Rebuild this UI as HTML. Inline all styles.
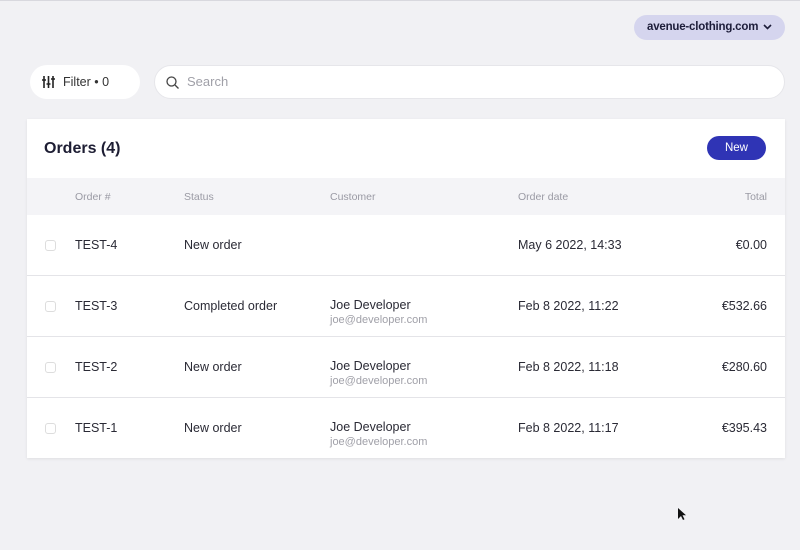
<!DOCTYPE html>
<html><head><meta charset="utf-8"><style>
*{box-sizing:border-box;margin:0;padding:0}
body{width:800px;height:550px;background:#f1f1f4;font-family:"Liberation Sans",sans-serif;position:relative;overflow:hidden;color:#2a2a35}
.topline{position:absolute;left:0;top:0;width:800px;height:1px;background:#d8d8de}
.shop{position:absolute;left:634px;top:15px;width:151px;height:25px;border-radius:13px;background:#d5d5ee;font-size:11.5px;font-weight:bold;color:#1d1d3a;line-height:25px;padding-left:13px;white-space:nowrap;letter-spacing:-0.2px}
.filter{position:absolute;left:30px;top:65px;width:110px;height:34px;border-radius:17px;background:#fff;font-size:12.5px;line-height:34px;padding-left:33px;color:#333}
.search{position:absolute;left:154px;top:65px;width:631px;height:34px;border-radius:17px;background:#fff;border:1px solid #e6e6ea;font-size:13px;line-height:32px;padding-left:32px;color:#a0a0a8}
.card{position:absolute;left:27px;top:119px;width:758px;height:339px;background:#fff;box-shadow:0 1px 3px rgba(0,0,0,.08)}
.title{position:absolute;left:17px;top:21px;font-size:16px;font-weight:bold;color:#1d1d33}
.new{position:absolute;left:680px;top:17px;width:59px;height:24px;border-radius:12px;background:#2f34b5;color:#fff;font-size:11.5px;text-align:center;line-height:24px}
.head{position:absolute;left:0;top:59px;width:758px;height:37px;background:#f4f4f7;font-size:10.5px;color:#9a9aa4}
.row{position:absolute;left:0;width:758px;height:61px;border-top:1px solid #e4e4e8;font-size:12.5px;color:#2a2a35}
.c{position:absolute}
.cb{position:absolute;left:18px;width:11px;height:11px;border:1px solid #ddd;border-radius:3px}
.em{font-size:11px;color:#a0a0a8;display:block;margin-top:2px}
</style></head><body>
<div class="topline"></div>
<div class="shop">avenue-clothing.com <svg width="9" height="6" viewBox="0 0 9 6" style="margin-left:2px"><path d="M1 1l3.5 3.5L8 1" stroke="#1d1d3a" stroke-width="1.6" fill="none"/></svg></div>
<div class="filter"><svg style="position:absolute;left:12px;top:11px" width="13" height="12" viewBox="0 0 13 12"><g stroke="#222" stroke-width="1.6"><path d="M2 0v12M6.5 0v12M11 0v12"/><path d="M0 4h4M4.5 8h4M9 3h4"/></g></svg>Filter • 0</div>
<div class="search"><svg style="position:absolute;left:11px;top:10px" width="13" height="13" viewBox="0 0 13 13"><circle cx="5.5" cy="5.5" r="4.5" stroke="#444" stroke-width="1.3" fill="none"/><path d="M9 9l3.5 3.5" stroke="#444" stroke-width="1.3"/></svg>Search</div>
<div class="card">
<div class="title">Orders (4)</div>
<div class="new">New</div>
<div class="head"><span class="c" style="left:48px;top:13px">Order #</span><span class="c" style="left:157px;top:13px">Status</span><span class="c" style="left:303px;top:13px">Customer</span><span class="c" style="left:491px;top:13px">Order date</span><span class="c" style="right:18px;top:13px">Total</span></div>
<div class="row" style="top:96px;border-top:none"><div class="cb" style="top:25px"></div><span class="c" style="left:48px;top:23px">TEST-4</span><span class="c" style="left:157px;top:23px">New order</span><span class="c" style="left:491px;top:23px">May 6 2022, 14:33</span><span class="c" style="right:18px;top:23px">€0.00</span></div>
<div class="row" style="top:156px"><div class="cb" style="top:25px"></div><span class="c" style="left:48px;top:23px">TEST-3</span><span class="c" style="left:157px;top:23px">Completed order</span><span class="c" style="left:303px;top:22px">Joe Developer<span class="em">joe@developer.com</span></span><span class="c" style="left:491px;top:23px">Feb 8 2022, 11:22</span><span class="c" style="right:18px;top:23px">€532.66</span></div>
<div class="row" style="top:217px"><div class="cb" style="top:25px"></div><span class="c" style="left:48px;top:23px">TEST-2</span><span class="c" style="left:157px;top:23px">New order</span><span class="c" style="left:303px;top:22px">Joe Developer<span class="em">joe@developer.com</span></span><span class="c" style="left:491px;top:23px">Feb 8 2022, 11:18</span><span class="c" style="right:18px;top:23px">€280.60</span></div>
<div class="row" style="top:278px"><div class="cb" style="top:25px"></div><span class="c" style="left:48px;top:23px">TEST-1</span><span class="c" style="left:157px;top:23px">New order</span><span class="c" style="left:303px;top:22px">Joe Developer<span class="em">joe@developer.com</span></span><span class="c" style="left:491px;top:23px">Feb 8 2022, 11:17</span><span class="c" style="right:18px;top:23px">€395.43</span></div>
</div>
<svg style="position:absolute;left:678px;top:508px" width="9" height="13" viewBox="0 0 9 13"><path d="M0 0v11l3-3 2 4 1.5-.7-2-4H8z" fill="#111"/></svg>
</body></html>
